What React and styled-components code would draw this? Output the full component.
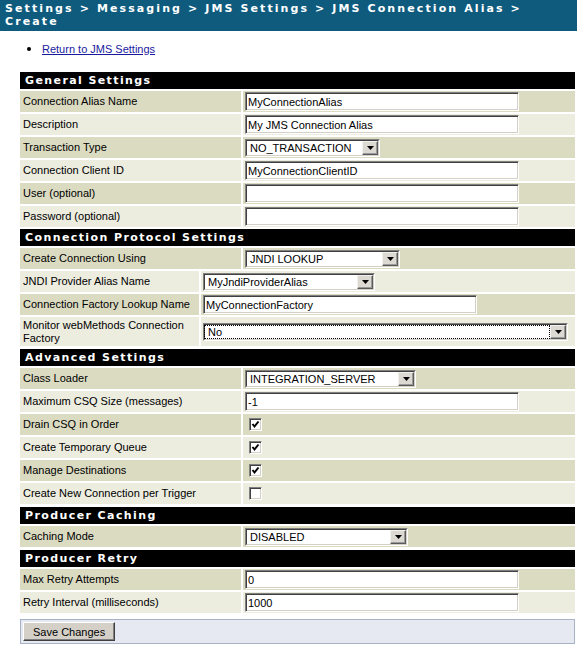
import React from "react";
import styled, { createGlobalStyle } from "styled-components";

const GlobalStyle = createGlobalStyle`
  html, body { margin: 0; padding: 0; background: #fff; }
  body {
    font-family: "Liberation Sans", Arial, sans-serif;
    font-size: 11px;
    color: #000;
  }
`;

const Page = styled.div`
  width: 580px;
`;

const TitleBar = styled.div`
  margin-right: 3px;
  background: #0e5b7e;
  color: #fff;
  font-family: "DejaVu Sans", Verdana, sans-serif;
  font-weight: bold;
  font-size: 11px;
  letter-spacing: 2.1px;
  line-height: 13px;
  padding: 2px 5px 3px;
`;

const LinkList = styled.ul`
  margin: 10px 0 0;
  padding-left: 42px;
  list-style: disc;
  li { line-height: 14px; }
  li::marker { font-size: 14px; }
`;

const NavLink = styled.a`
  color: #1a1aa0;
  text-decoration: underline;
`;

const Table = styled.div`
  margin: 16px 0 0 20px;
  width: 555px;
  display: flex;
  flex-direction: column;
  gap: 2px;
`;

const SectionHeader = styled.div`
  height: 17px;
  margin-top: ${(p) => (p.$spaced ? 1 : 0)}px;
  background: #000;
  color: #fff;
  font-family: "DejaVu Sans", Verdana, sans-serif;
  font-weight: bold;
  font-size: 11px;
  letter-spacing: 1.4px;
  padding-left: 5px;
  display: flex;
  align-items: center;
`;

const Group = styled.div`
  display: flex;
  flex-direction: column;
  gap: 2px;
`;

const Row = styled.div`
  display: grid;
  grid-template-columns: ${(p) => p.$labelWidth || 221}px 1fr;
  column-gap: 2px;
  min-height: ${(p) => p.$height || 21}px;
`;

const shadeColor = (s) => (s === "dark" ? "#dbdbc2" : "#ececdf");

const LabelCell = styled.div`
  background: ${(p) => shadeColor(p.$shade)};
  padding: 0 3px;
  display: flex;
  align-items: center;
  line-height: 13px;
`;

const ValueCell = styled.div`
  background: ${(p) => shadeColor(p.$shade)};
  padding: 0 2px;
  display: flex;
  align-items: center;
`;

const TextInput = styled.input`
  box-sizing: border-box;
  width: 274px;
  height: 19px;
  margin: 0;
  padding: 0 2px;
  border: 1px solid;
  border-color: #808080 #ffffff #ffffff #808080;
  box-shadow: inset 1px 1px 0 #404040, inset -1px -1px 0 #d4d0c8;
  background: #fff;
  font-family: "Liberation Sans", Arial, sans-serif;
  font-size: 11px;
  color: #000;
  outline: none;
`;

const SelectFrame = styled.div`
  box-sizing: border-box;
  height: 18px;
  border: 1px solid;
  border-color: #808080 #ffffff #ffffff #808080;
`;

const SelectInner = styled.div`
  box-sizing: border-box;
  height: 100%;
  border: 1px solid;
  border-color: #404040 #d4d0c8 #d4d0c8 #404040;
  background: #fff;
  display: flex;
  align-items: stretch;
`;

const SelectValue = styled.span`
  flex: 1;
  display: flex;
  align-items: center;
  padding-left: 3px;
  margin: 1px 1px 1px 0;
  outline: ${(p) => (p.$focused ? "1px dotted #000" : "none")};
  white-space: nowrap;
  overflow: hidden;
`;

const ArrowButton = styled.span`
  box-sizing: border-box;
  width: 16px;
  background: #dcd9d2;
  border: 1px solid;
  border-color: #f2f1ee #5a5a5a #5a5a5a #f2f1ee;
  box-shadow: inset -1px -1px 0 #9a9a9a;
  display: flex;
  align-items: center;
  justify-content: center;
`;

const CheckFrame = styled.span`
  box-sizing: border-box;
  width: 13px;
  height: 13px;
  margin-left: 4px;
  border: 1px solid;
  border-color: #808080 #ffffff #ffffff #808080;
  box-shadow: inset 1px 1px 0 #404040, inset -1px -1px 0 #d4d0c8;
  background: #fff;
  display: flex;
  align-items: center;
  justify-content: center;
`;

const SaveBar = styled.div`
  margin-top: 4px;
  height: 25px;
  box-sizing: border-box;
  background: #e6e9f1;
  border: 1px solid #a8b2c6;
  display: flex;
  align-items: center;
  padding-left: 2px;
`;

const Button = styled.button`
  box-sizing: border-box;
  height: 19px;
  padding: 0 9px;
  margin: 0;
  background: #d4d0c8;
  border: 1px solid;
  border-color: #ffffff #404040 #404040 #ffffff;
  box-shadow: inset -1px -1px 0 #808080;
  font-family: "Liberation Sans", Arial, sans-serif;
  font-size: 11px;
  color: #000;
`;

const Select = ({ width, value, focused }) => (
  <SelectFrame style={{ width }}>
    <SelectInner>
      <SelectValue $focused={focused}>{value}</SelectValue>
      <ArrowButton>
        <svg width="7" height="4" viewBox="0 0 7 4">
          <polygon points="0,0 7,0 3.5,4" fill="#000" />
        </svg>
      </ArrowButton>
    </SelectInner>
  </SelectFrame>
);

const Checkbox = ({ checked }) => (
  <CheckFrame>
    {checked && (
      <svg width="9" height="9" viewBox="0 0 9 9">
        <polyline points="1.5,4 3.5,6.5 7.5,1.5" fill="none" stroke="#000" strokeWidth="2" />
      </svg>
    )}
  </CheckFrame>
);

const Field = ({ label, shade, labelWidth, height, children }) => (
  <Row $labelWidth={labelWidth} $height={height}>
    <LabelCell $shade={shade}>{label}</LabelCell>
    <ValueCell $shade={shade}>{children}</ValueCell>
  </Row>
);

export default function App() {
  return (
    <Page>
      <GlobalStyle />
      <TitleBar>
        Settings &gt; Messaging &gt; JMS Settings &gt; JMS Connection Alias &gt;
        <br />
        Create
      </TitleBar>
      <LinkList>
        <li>
          <NavLink href="#">Return to JMS Settings</NavLink>
        </li>
      </LinkList>

      <Table>
        <SectionHeader>General Settings</SectionHeader>
        <Field label="Connection Alias Name" shade="dark">
          <TextInput defaultValue="MyConnectionAlias" />
        </Field>
        <Field label="Description" shade="light">
          <TextInput defaultValue="My JMS Connection Alias" />
        </Field>
        <Field label="Transaction Type" shade="dark">
          <Select width={135} value="NO_TRANSACTION" />
        </Field>
        <Field label="Connection Client ID" shade="light">
          <TextInput defaultValue="MyConnectionClientID" />
        </Field>
        <Field label="User (optional)" shade="dark">
          <TextInput defaultValue="" />
        </Field>
        <Field label="Password (optional)" shade="light">
          <TextInput type="password" defaultValue="" />
        </Field>

        <SectionHeader>Connection Protocol Settings</SectionHeader>
        <Field label="Create Connection Using" shade="dark">
          <Select width={155} value="JNDI LOOKUP" />
        </Field>
        <Group>
          <Field label="JNDI Provider Alias Name" shade="light" labelWidth={179}>
            <Select width={172} value="MyJndiProviderAlias" />
          </Field>
          <Field label="Connection Factory Lookup Name" shade="dark" labelWidth={179}>
            <TextInput defaultValue="MyConnectionFactory" />
          </Field>
          <Field label="Monitor webMethods Connection Factory" shade="light" labelWidth={179} height={29}>
            <Select width={365} value="No" focused />
          </Field>
        </Group>

        <SectionHeader $spaced>Advanced Settings</SectionHeader>
        <Field label="Class Loader" shade="dark">
          <Select width={171} value="INTEGRATION_SERVER" />
        </Field>
        <Field label="Maximum CSQ Size (messages)" shade="light">
          <TextInput defaultValue="-1" />
        </Field>
        <Field label="Drain CSQ in Order" shade="dark">
          <Checkbox checked />
        </Field>
        <Field label="Create Temporary Queue" shade="light">
          <Checkbox checked />
        </Field>
        <Field label="Manage Destinations" shade="dark">
          <Checkbox checked />
        </Field>
        <Field label="Create New Connection per Trigger" shade="light">
          <Checkbox />
        </Field>

        <SectionHeader $spaced>Producer Caching</SectionHeader>
        <Field label="Caching Mode" shade="dark">
          <Select width={163} value="DISABLED" />
        </Field>

        <SectionHeader $spaced>Producer Retry</SectionHeader>
        <Field label="Max Retry Attempts" shade="dark">
          <TextInput defaultValue="0" />
        </Field>
        <Field label="Retry Interval (milliseconds)" shade="light">
          <TextInput defaultValue="1000" />
        </Field>

        <SaveBar>
          <Button type="button">Save Changes</Button>
        </SaveBar>
      </Table>
    </Page>
  );
}
